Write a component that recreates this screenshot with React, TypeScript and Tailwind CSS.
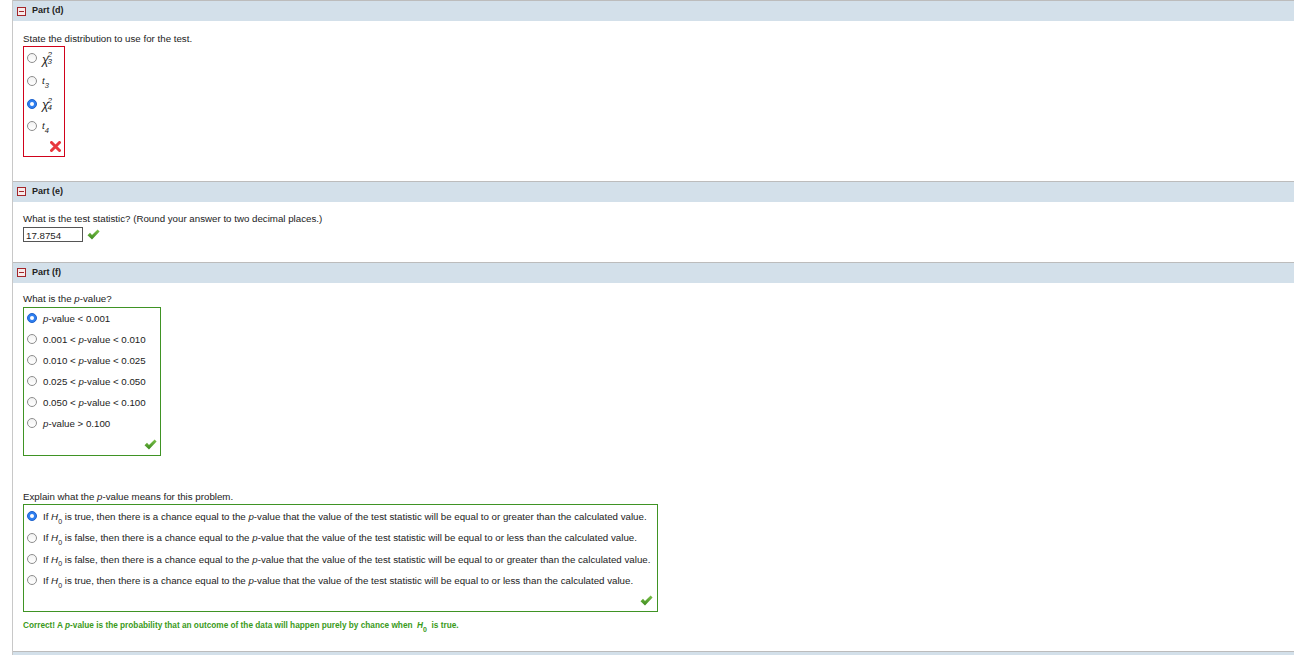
import React from 'react';

const font = "font-['Liberation_Sans',Arial,sans-serif]";

function Radio({ checked }: { checked?: boolean }) {
  if (checked) {
    return (
      <span className="w-[10px] h-[10px] rounded-full bg-[#2f7ff0] border border-[#1f63cc] flex items-center justify-center shrink-0">
        <span className="w-[4px] h-[4px] rounded-full bg-white" />
      </span>
    );
  }
  return <span className="w-[10px] h-[10px] rounded-full border border-[#8d8d8d] bg-gradient-to-b from-[#f2f2f2] to-white shrink-0" />;
}

function Check() {
  return (
    <svg width="13" height="11" viewBox="0 0 13 11">
      <defs>
        <linearGradient id="chk" x1="0" y1="0" x2="0" y2="1">
          <stop offset="0" stopColor="#7cc24a" />
          <stop offset="1" stopColor="#3d8a1f" />
        </linearGradient>
      </defs>
      <path d="M0.5 6.2 L3 3.8 L5 6 L10.6 0.4 L12.6 2.6 L5 10.4 Z" fill="url(#chk)" />
    </svg>
  );
}

function Cross() {
  return (
    <svg width="11" height="11" viewBox="0 0 11 11">
      <path d="M1.5 1.5 L9.5 9.5 M9.5 1.5 L1.5 9.5" stroke="#e8383d" strokeWidth="3" strokeLinecap="round" />
    </svg>
  );
}

function Header({ label }: { label: string }) {
  return (
    <div className="h-[21px] border-t border-[#bcbcbc] bg-[#d3e0ea] flex items-center pl-[4px]">
      <span className="w-[9px] h-[9px] border border-[#a3262a] bg-[#f7eaea] flex items-center justify-center">
        <span className="w-[5px] h-[1px] bg-[#a3262a]" />
      </span>
      <span className="ml-[6px] text-[9px] font-bold text-[#222]">{label}</span>
    </div>
  );
}

function P() {
  return <span className="italic">p</span>;
}

function H0() {
  return (
    <span>
      <span className="italic">H</span>
      <sub className="text-[7px] align-[-2px]">0</sub>
    </span>
  );
}

function Chi({ df }: { df: number }) {
  return (
    <span className="inline-flex items-center">
      <span className="italic text-[12px] leading-[12px] pt-[3px]">χ</span>
      <span className="inline-flex flex-col text-[8px] leading-[7px] -ml-[1px] italic">
        <span>2</span>
        <span>{df}</span>
      </span>
    </span>
  );
}

function T({ df }: { df: number }) {
  return (
    <span className="italic">
      t<sub className="text-[7.5px] align-[-2px]">{df}</sub>
    </span>
  );
}

const pOptions: React.ReactNode[] = [
  <><P />-value &lt; 0.001</>,
  <>0.001 &lt; <P />-value &lt; 0.010</>,
  <>0.010 &lt; <P />-value &lt; 0.025</>,
  <>0.025 &lt; <P />-value &lt; 0.050</>,
  <>0.050 &lt; <P />-value &lt; 0.100</>,
  <><P />-value &gt; 0.100</>,
];

const explainOptions: React.ReactNode[] = [
  <>If <H0 /> is true, then there is a chance equal to the <P />-value that the value of the test statistic will be equal to or greater than the calculated value.</>,
  <>If <H0 /> is false, then there is a chance equal to the <P />-value that the value of the test statistic will be equal to or less than the calculated value.</>,
  <>If <H0 /> is false, then there is a chance equal to the <P />-value that the value of the test statistic will be equal to or greater than the calculated value.</>,
  <>If <H0 /> is true, then there is a chance equal to the <P />-value that the value of the test statistic will be equal to or less than the calculated value.</>,
];

export default function App() {
  return (
    <div className={`${font} bg-white text-[#1c1c1c] text-[9.73px] min-h-[655px] w-[1294px] overflow-hidden`}>
      <div className="ml-[12px] border-l border-[#c8c8c8] min-h-[655px]">
        {/* Part (d) */}
        <Header label="Part (d)" />
        <div className="pl-[10px] pb-[24px]">
          <div className="mt-[10px] h-[14px] leading-[14px] pt-[1px]">State the distribution to use for the test.</div>
          <div className="mt-[1px] w-[42px] border border-[#d0021b]">
            {[
              { el: <Chi df={3} />, checked: false },
              { el: <T df={3} />, checked: false },
              { el: <Chi df={4} />, checked: true },
              { el: <T df={4} />, checked: false },
            ].map((o, i) => (
              <div key={i} className="h-[22.7px] flex items-center pl-[3px] gap-[5px]">
                <Radio checked={o.checked} />
                {o.el}
              </div>
            ))}
            <div className="h-[18px] flex items-center justify-end pr-[3px] pb-[1px]">
              <Cross />
            </div>
          </div>
        </div>

        {/* Part (e) */}
        <Header label="Part (e)" />
        <div className="pl-[10px] pb-[20px]">
          <div className="mt-[9px] h-[14px] leading-[14px] pt-[1px]">What is the test statistic? (Round your answer to two decimal places.)</div>
          <div className="mt-[2px] flex items-center gap-[4px]">
            <div className="w-[60px] h-[15px] border border-[#555] pl-[2px] leading-[13px] pt-[1px]">17.8754</div>
            <Check />
          </div>
        </div>

        {/* Part (f) */}
        <Header label="Part (f)" />
        <div className="pl-[10px] pb-[20px]">
          <div className="mt-[8px] h-[14px] leading-[14px] pt-[1px]">What is the <P />-value?</div>
          <div className="mt-[2px] w-[138px] border border-[#3f9324]">
            {pOptions.map((o, i) => (
              <div key={i} className="h-[21px] flex items-center pl-[3px] gap-[6px]">
                <Radio checked={i === 0} />
                <span className="pt-[3px]">{o}</span>
              </div>
            ))}
            <div className="h-[21px] flex items-center justify-end pr-[3px]">
              <Check />
            </div>
          </div>

          <div className="mt-[33px] h-[14px] leading-[14px] pt-[1px]">Explain what the <P />-value means for this problem.</div>
          <div className="mt-[1px] w-[635px] border border-[#3f9324] pt-[1px]">
            {explainOptions.map((o, i) => (
              <div key={i} className="h-[21.3px] flex items-center pl-[3px] gap-[6px] whitespace-nowrap">
                <Radio checked={i === 0} />
                <span className="pt-[2px]">{o}</span>
              </div>
            ))}
            <div className="h-[20px] flex items-center justify-end pr-[4px]">
              <Check />
            </div>
          </div>

          <div className="mt-[5px] h-[14px] leading-[14px] pt-[2px] text-[8.25px] font-bold text-[#3a9a1a] whitespace-nowrap">
            Correct! A <P />-value is the probability that an outcome of the data will happen purely by chance when&nbsp; <H0 />&nbsp; is true.
          </div>
        </div>

        <Header label="" />
      </div>
    </div>
  );
}
